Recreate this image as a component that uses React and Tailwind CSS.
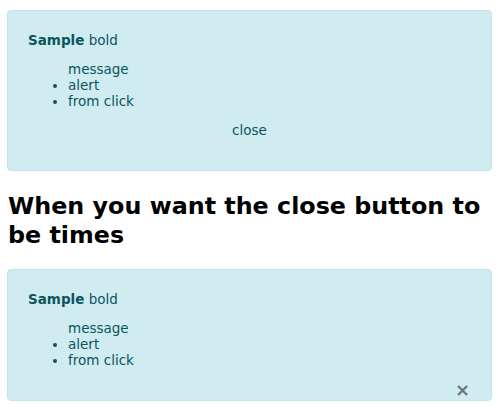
export default function App() {
  const Body = () => (
    <>
      <p className="m-0">
        <b className="font-bold">Sample</b> bold
      </p>
      <ul className="mt-[13px] mb-[13px] pl-10 list-disc">
        <li className="list-none">message</li>
        <li>alert</li>
        <li>from click</li>
      </ul>
    </>
  );

  return (
    <div className="pt-[10px] pl-[7px] pr-[6px] font-['DejaVu_Sans',sans-serif] text-[13.5px] leading-4">
      <div className="rounded border border-[#bee5eb] bg-[#d1ecf1] text-[#0c5460] px-5 pt-[21px] pb-[19px]">
        <Body />
        <div className="mt-[13px] mb-[13px] text-center">close</div>
      </div>

      <h2 className="mt-[21px] mb-[19px] pl-px text-[23.8px] leading-[29px] font-bold text-black">
        When you want the close button to be times
      </h2>

      <div className="relative rounded border border-[#bee5eb] bg-[#d1ecf1] text-[#0c5460] px-5 pt-[21px] pb-[19px]">
        <Body />
        <button className="absolute right-[21px] bottom-[1px] text-[18px] leading-none font-bold text-black opacity-50">
          ×
        </button>
      </div>
    </div>
  );
}
